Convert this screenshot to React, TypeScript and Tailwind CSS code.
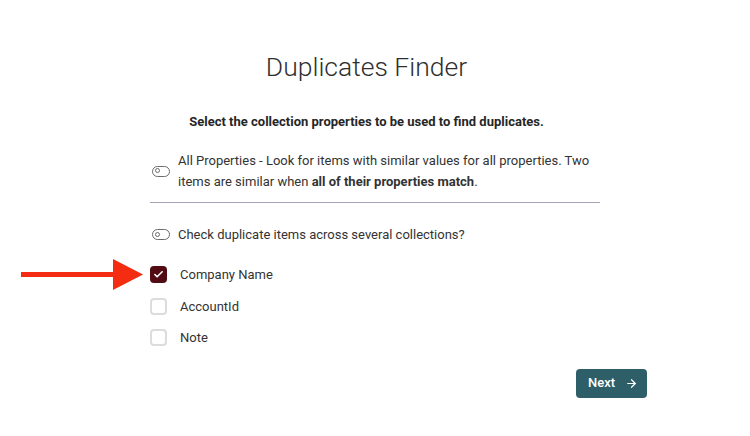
import { useState } from "react";
import { ArrowRight, Check } from "lucide-react";

const Toggle = () => (
  <span className="relative inline-block w-[18px] h-[11px] rounded-full border-[1.5px] border-[#6b6b6b] shrink-0">
    <span className="absolute left-[2px] top-[1.5px] w-[5px] h-[5px] rounded-full border-[1.5px] border-[#6b6b6b]" />
  </span>
);

const App = () => {
  const [checked, setChecked] = useState<Record<string, boolean>>({
    "Company Name": true,
    AccountId: false,
    Note: false,
  });

  return (
    <div className="relative w-[750px] h-[436px] bg-white text-[#333] font-['Roboto',sans-serif]">
      {/* pointer arrow */}
      <svg
        className="absolute left-[21px] top-[259px]"
        width="123"
        height="31"
        viewBox="0 0 123 31"
      >
        <rect x="0" y="13" width="94" height="5" fill="#f42c12" />
        <polygon points="92,0 122,15.5 92,31" fill="#f42c12" />
      </svg>

      <div className="ml-[86px] w-[561px] pt-[50px]">
        <h1 className="text-center text-[26.5px] leading-[34px] font-light text-[#2f2f2f]">
          Duplicates Finder
        </h1>
        <p className="mt-[28px] text-center text-[13px] leading-[20px] font-bold text-[#262626]">
          Select the collection properties to be used to find duplicates.
        </p>

        <div className="ml-[64px] w-[452px]">
          <div className="mt-[18px] flex items-center gap-[8px] pl-[2px]">
            <Toggle />
            <p className="text-[13px] leading-[21px]">
              All Properties - Look for items with similar values for all
              properties. Two items are similar when{" "}
              <b className="font-bold">all of their properties match</b>.
            </p>
          </div>

          <div className="mt-[10px] w-[450px] border-t border-[#a6a3b6]" />

          <div className="mt-[21px] flex items-center gap-[8px] pl-[2px]">
            <Toggle />
            <span className="text-[13px] leading-[21px]">
              Check duplicate items across several collections?
            </span>
          </div>

          <div className="mt-[14px] flex flex-col">
            {Object.keys(checked).map((name) => (
              <label
                key={name}
                className="flex items-center gap-[13px] h-[31.5px] cursor-pointer"
                onClick={() =>
                  setChecked((prev) => ({ ...prev, [name]: !prev[name] }))
                }
              >
                {checked[name] ? (
                  <span className="w-[17px] h-[17px] rounded-[4px] bg-[#520b12] flex items-center justify-center">
                    <Check size={11} strokeWidth={3.5} className="text-white" />
                  </span>
                ) : (
                  <span className="w-[17px] h-[17px] rounded-[4px] border-2 border-[#dcdcdc]" />
                )}
                <span className="text-[13px] leading-[21px]">{name}</span>
              </label>
            ))}
          </div>
        </div>

        <div className="mt-[15px] flex justify-end">
          <button className="h-[29px] w-[71px] pl-[12px] flex items-center gap-[10px] rounded-[4px] bg-[#2e5e68] text-white text-[13px] font-medium">
            Next
            <ArrowRight size={13} strokeWidth={2.2} />
          </button>
        </div>
      </div>
    </div>
  );
};

export default App;
